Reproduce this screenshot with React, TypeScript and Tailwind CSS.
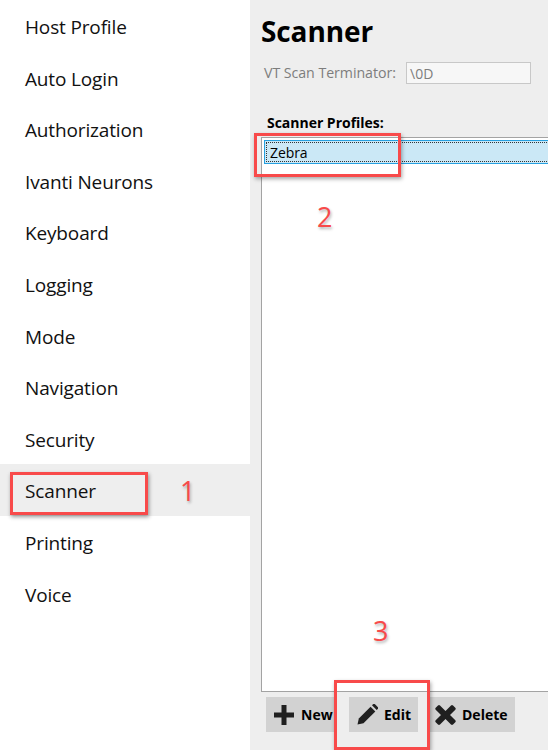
import React from "react";

const menuItems = [
  "Host Profile",
  "Auto Login",
  "Authorization",
  "Ivanti Neurons",
  "Keyboard",
  "Logging",
  "Mode",
  "Navigation",
  "Security",
  "Scanner",
  "Printing",
  "Voice",
];

const PlusIcon = () => (
  <svg width="20" height="20" viewBox="0 0 20 20" fill="#1f1f1f">
    <path d="M7.5 0h5v7.500H20v5h-7.500V20h-5v-7.500H0v-5h7.500z" />
  </svg>
);

const PencilIcon = () => (
  <svg width="21" height="21" viewBox="0 0 21 21" fill="#1f1f1f">
    <path d="M0.5 20.5l1.3-6L13.6 2.7l4.7 4.700L6.500 19.200z" />
    <path d="M15 1.300l1-1a1.400 1.400 0 0 1 2 0l2.700 2.700a1.400 1.400 0 0 1 0 2l-1 1z" />
  </svg>
);

const CrossIcon = () => (
  <svg width="21" height="20" viewBox="0 0 21 20" fill="#1f1f1f">
    <path d="M5 0.500L10.500 6 16 0.500a1.500 1.500 0 0 1 2 0l2.300 2.300a1.500 1.500 0 0 1 0 2L15 10l5.300 5.200a1.500 1.500 0 0 1 0 2L18 19.500a1.500 1.500 0 0 1-2 0L10.500 14 5 19.500a1.500 1.500 0 0 1-2 0L0.700 17.200a1.500 1.500 0 0 1 0-2L6 10 0.700 4.800a1.500 1.500 0 0 1 0-2L3 0.500a1.500 1.500 0 0 1 2 0z" />
  </svg>
);

const App: React.FC = () => {
  return (
    <div className="relative flex h-[750px] w-[548px] overflow-hidden bg-[#eeeeee] font-['Open_Sans','Noto_Sans',sans-serif] text-black">
      <div className="flex w-[250px] shrink-0 flex-col bg-white">
        {menuItems.map((item) => (
          <div
            key={item}
            className={`flex h-[51.6px] shrink-0 items-center pt-[3px] pl-[25px] text-[19px] tracking-[-0.15px] text-[#111111] ${
              item === "Scanner" ? "bg-[#eeeeee]" : ""
            }`}
          >
            {item}
          </div>
        ))}
      </div>

      <div className="flex min-w-0 flex-1 flex-col pl-[11px]">
        <h1 className="mt-[11px] text-[28px] leading-[40px] font-bold tracking-[-0.1px]">Scanner</h1>

        <div className="mt-[11px] flex items-center pl-[3px]">
          <span className="w-[142px] text-[14.2px] tracking-[-0.05px] text-[#7d7d7d]">VT Scan Terminator:</span>
          <div className="flex h-[22px] w-[125px] items-center border border-[#c8c8c8] bg-[#f7f7f7] pl-[3px] text-[14px] text-[#7d7d7d]">
            \0D
          </div>
        </div>

        <div className="mt-[29px] pl-[6px] text-[14px] leading-[20px] font-bold tracking-[-0.02px]">Scanner Profiles:</div>

        <div className="mt-[4px] h-[555px] w-[300px] shrink-0 border border-[#a3a3a3] bg-white p-[2px]">
          <div className="flex h-[24px] items-center border border-[#27a0e0] bg-[#cbe8f6] pl-[1px]">
            <div className="flex h-[20px] w-full items-center border border-dotted border-[#333333] pl-[3px] text-[14px] tracking-[-0.1px]">
              Zebra
            </div>
          </div>
        </div>

        <div className="mt-[5px] flex items-center pl-[5px] text-[14px] font-bold">
          <button className="flex h-[35px] w-[69px] items-center gap-[7px] bg-[#d2d2d2] pl-[8px]">
            <PlusIcon />
            <span>New</span>
          </button>
          <button className="ml-[14px] flex h-[35px] w-[69px] items-center gap-[6px] bg-[#d2d2d2] pl-[8px]">
            <PencilIcon />
            <span>Edit</span>
          </button>
          <button className="ml-[11px] flex h-[35px] w-[86px] items-center gap-[6px] bg-[#d2d2d2] pl-[6px]">
            <CrossIcon />
            <span>Delete</span>
          </button>
        </div>
      </div>

      {/* red callouts drawn on top of the screenshot */}
      <div className="absolute top-[472px] left-[10px] h-[43px] w-[138px] border-[3px] border-[#f84a4a] shadow-[1px_2px_4px_rgba(0,0,0,0.4)]" />
      <div className="absolute top-[133px] left-[254px] h-[44px] w-[147px] border-[3px] border-[#f84a4a] shadow-[1px_2px_4px_rgba(0,0,0,0.35)]" />
      <div className="absolute top-[680px] left-[334px] h-[70px] w-[96px] border-[3px] border-[#f84a4a] shadow-[1px_2px_4px_rgba(0,0,0,0.35)]" />
      <span className="absolute top-[473px] left-[180px] text-[27px] leading-[36px] text-[#f84a4a] [text-shadow:1px_2px_3px_rgba(0,0,0,0.3)]">1</span>
      <span className="absolute top-[199px] left-[317px] text-[27px] leading-[36px] text-[#f84a4a] [text-shadow:1px_2px_3px_rgba(0,0,0,0.3)]">2</span>
      <span className="absolute top-[613px] left-[373px] text-[27px] leading-[36px] text-[#f84a4a] [text-shadow:1px_2px_3px_rgba(0,0,0,0.3)]">3</span>
    </div>
  );
};

export default App;
